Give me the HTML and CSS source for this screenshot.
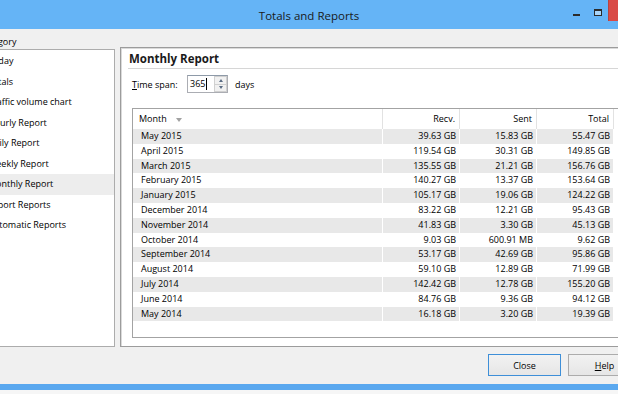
FILE: index.html
```html
<!DOCTYPE html>
<html lang="en">
<head>
<meta charset="utf-8">
<title>Totals and Reports</title>
<link rel="stylesheet" href="styles.css">
</head>
<body>
<div class="window">
  <header class="titlebar">
    <div class="tb-side"></div>
    <div class="title">Totals and Reports</div>
    <div class="tb-side caption">
      <div class="cap-min"></div>
      <div class="cap-max"></div>
      <div class="cap-close"></div>
    </div>
  </header>
  <main class="client">
    <div class="content">
      <aside class="sidebar">
        <div class="cat-label">Category</div>
        <ul class="catlist">
          <li>Today</li>
          <li>Totals</li>
          <li>Traffic volume chart</li>
          <li>Hourly Report</li>
          <li>Daily Report</li>
          <li>Weekly Report</li>
          <li class="selected">Monthly Report</li>
          <li>Export Reports</li>
          <li>Automatic Reports</li>
        </ul>
      </aside>
      <section class="panel">
        <h1 class="panel-title">Monthly Report</h1>
        <div class="timespan">
          <span class="lbl"><u>T</u>ime span:</span>
          <div class="spin">
            <span class="spin-val">365</span><span class="caret"></span>
            <div class="spin-btns">
              <span class="sb up"><i></i></span>
              <span class="sb down"><i></i></span>
            </div>
          </div>
          <span class="days">days</span>
        </div>
        <div class="grid">
          <div class="row head">
            <div class="c month">Month<span class="sort"></span></div>
            <div class="c num">Recv.</div>
            <div class="c num">Sent</div>
            <div class="c num">Total</div>
            <div class="c"></div>
          </div>
          <div class="row"><div class="c month">May 2015</div><div class="c num">39.63 GB</div><div class="c num">15.83 GB</div><div class="c num">55.47 GB</div><div class="c"></div></div>
          <div class="row"><div class="c month">April 2015</div><div class="c num">119.54 GB</div><div class="c num">30.31 GB</div><div class="c num">149.85 GB</div><div class="c"></div></div>
          <div class="row"><div class="c month">March 2015</div><div class="c num">135.55 GB</div><div class="c num">21.21 GB</div><div class="c num">156.76 GB</div><div class="c"></div></div>
          <div class="row"><div class="c month">February 2015</div><div class="c num">140.27 GB</div><div class="c num">13.37 GB</div><div class="c num">153.64 GB</div><div class="c"></div></div>
          <div class="row"><div class="c month">January 2015</div><div class="c num">105.17 GB</div><div class="c num">19.06 GB</div><div class="c num">124.22 GB</div><div class="c"></div></div>
          <div class="row"><div class="c month">December 2014</div><div class="c num">83.22 GB</div><div class="c num">12.21 GB</div><div class="c num">95.43 GB</div><div class="c"></div></div>
          <div class="row"><div class="c month">November 2014</div><div class="c num">41.83 GB</div><div class="c num">3.30 GB</div><div class="c num">45.13 GB</div><div class="c"></div></div>
          <div class="row"><div class="c month">October 2014</div><div class="c num">9.03 GB</div><div class="c num">600.91 MB</div><div class="c num">9.62 GB</div><div class="c"></div></div>
          <div class="row"><div class="c month">September 2014</div><div class="c num">53.17 GB</div><div class="c num">42.69 GB</div><div class="c num">95.86 GB</div><div class="c"></div></div>
          <div class="row"><div class="c month">August 2014</div><div class="c num">59.10 GB</div><div class="c num">12.89 GB</div><div class="c num">71.99 GB</div><div class="c"></div></div>
          <div class="row"><div class="c month">July 2014</div><div class="c num">142.42 GB</div><div class="c num">12.78 GB</div><div class="c num">155.20 GB</div><div class="c"></div></div>
          <div class="row"><div class="c month">June 2014</div><div class="c num">84.76 GB</div><div class="c num">9.36 GB</div><div class="c num">94.12 GB</div><div class="c"></div></div>
          <div class="row"><div class="c month">May 2014</div><div class="c num">16.18 GB</div><div class="c num">3.20 GB</div><div class="c num">19.39 GB</div><div class="c"></div></div>
        </div>
      </section>
    </div>
    <div class="buttons">
      <button class="btn default">Close</button>
      <button class="btn"><u>H</u>elp</button>
    </div>
  </main>
  <div class="frame-bottom"></div>
</div>
</body>
</html>
```
FILE: styles.css
```css
* { box-sizing: border-box; }
html, body {
  margin: 0;
  padding: 0;
}
body {
  width: 618px;
  height: 394px;
  overflow: hidden;
  background: #f6f6f6;
  font-family: "Open Sans", "Noto Sans", sans-serif;
  font-size: 9px;
  color: #000;
}
.window {
  width: 618px;
  height: 390px;
  overflow: hidden;
  display: flex;
  flex-direction: column;
}

/* title bar */
.titlebar {
  height: 29px;
  flex: none;
  background: #65b4f6;
  display: flex;
}
.tb-side {
  flex: 1 1 0;
}
.title {
  flex: none;
  font-size: 11.5px;
  line-height: 31px;
  color: #1a1a1a;
}
.caption {
  display: flex;
  justify-content: flex-end;
  align-items: flex-start;
}
.cap-min {
  flex: none;
  width: 7px;
  height: 2px;
  background: #2b2b2b;
  margin-top: 14px;
  margin-right: 14px;
}
.cap-max {
  flex: none;
  width: 8px;
  height: 7px;
  border: 1px solid #2b2b2b;
  border-top-width: 2px;
  background: #a9d4f8;
  margin-top: 9px;
  margin-right: 6px;
}
.cap-close {
  flex: none;
  width: 10px;
  height: 21px;
  background: #d94a46;
  border-left: 1px solid #b84340;
}

/* client */
.client {
  height: 355px;
  flex: none;
  background: #f0f0f0;
  display: flex;
  flex-direction: column;
}
.content {
  display: flex;
  height: 318px;
}
.sidebar {
  width: 136px;
  margin-left: -21px;
  flex: none;
  display: flex;
  flex-direction: column;
}
.cat-label {
  height: 20px;
  padding-top: 6px;
  line-height: 14px;
}
.catlist {
  list-style: none;
  margin: 0;
  padding: 1px 0 0 0;
  height: 298px;
  background: #fff;
  border: 1px solid #acacac;
}
.catlist li {
  height: 20.5px;
  line-height: 20.5px;
  padding-left: 8px;
  white-space: nowrap;
}
.catlist li.selected {
  background: #ededed;
}

.panel {
  flex: 1;
  margin: 18px -23px 0 5px;
  height: 300px;
  background: #fff;
  border: 1px solid #9c9c9c;
  box-shadow: inset 1px 1px 0 #dadada;
  display: flex;
  flex-direction: column;
}
.panel-title {
  margin: 0 0 0 7px;
  padding: 4px 0 2px 1px;
  font-size: 11.5px;
  font-weight: 700;
  line-height: 14px;
  border-bottom: 1px solid #d6d6d6;
  color: #1a1a1a;
}
.timespan {
  margin: 6px 0 0 11px;
  height: 18px;
  display: flex;
  align-items: center;
}
.lbl {
  width: 55px;
  flex: none;
}
.spin {
  width: 41px;
  height: 18px;
  border: 1px solid #abadb3;
  border-top-color: #8e9aa8;
  background: #fff;
  display: flex;
  align-items: center;
  padding-left: 2px;
}
.spin-val {
  line-height: 14px;
}
.caret {
  width: 1px;
  height: 12px;
  background: #000;
  margin-left: 1px;
}
.spin-btns {
  margin-left: auto;
  width: 13px;
  height: 16px;
  display: flex;
  flex-direction: column;
}
.sb {
  flex: 1;
  border: 1px solid #d0d0d0;
  background: #f1f1f1;
  display: flex;
  align-items: center;
  justify-content: center;
}
.sb + .sb { border-top: none; }
.sb i {
  width: 0;
  height: 0;
  border-left: 2.5px solid transparent;
  border-right: 2.5px solid transparent;
}
.up i { border-bottom: 3px solid #5a6c84; }
.down i { border-top: 3px solid #5a6c84; }
.days {
  margin-left: 7px;
}

/* grid */
.grid {
  margin: 15px 10px 0 11px;
  height: 230px;
  border: 1px solid #a3a3a3;
  background: #fff;
}
.row {
  display: grid;
  grid-template-columns: 250px 77px 77px 77px 1fr;
  height: 14.8px;
  line-height: 14.8px;
}
.row .c {
  border-right: 1px solid #fff;
  white-space: nowrap;
}
.row:nth-child(even) .c:not(:last-child) {
  background: #e8e8e8;
}
.row .month { padding-left: 8px; }
.row .num { text-align: right; padding-right: 3px; }
.row.head {
  height: 20px;
  line-height: 20px;
}
.row.head .c {
  border-right: 1px solid #e2e2e2;
  background: #fff;
}
.row.head .month {
  padding-left: 6px;
  display: flex;
  align-items: center;
}
.row.head .num { padding-right: 4px; }
.sort {
  width: 0;
  height: 0;
  margin-left: 9px;
  margin-top: 1px;
  border-left: 3.5px solid transparent;
  border-right: 3.5px solid transparent;
  border-top: 4px solid #a2a2a2;
}

/* buttons */
.buttons {
  display: flex;
  justify-content: flex-end;
  gap: 7px;
  margin-right: -23px;
  padding-top: 7px;
}
.btn {
  width: 73px;
  height: 22px;
  font: inherit;
  color: #000;
  border: 1px solid #acacac;
  background: linear-gradient(#f2f2f2, #e6e6e6);
  padding: 0;
}
.btn.default {
  border-color: #3e8fd8;
}

.frame-bottom {
  height: 6px;
  flex: none;
  background: #5aa8ef;
}
```
